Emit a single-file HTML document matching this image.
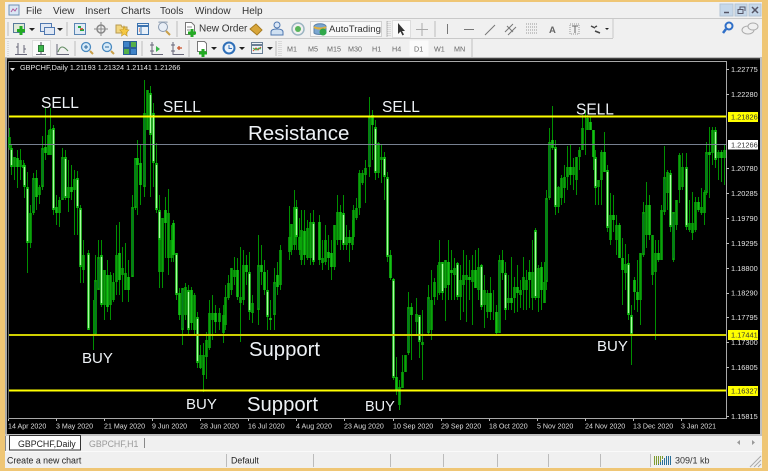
<!DOCTYPE html>
<html><head><meta charset="utf-8"><title>GBPCHF,Daily</title>
<style>
html,body{margin:0;padding:0;background:#f0f0f0;overflow:hidden}
svg{display:block;filter:blur(.35px)}
text{font-family:"Liberation Sans",sans-serif}
.m{font-size:10px;fill:#333}
.t{font-size:7.2px;fill:#666}
.a{font-size:7.4px;fill:#e4e4e4}
.d{font-size:7.1px;fill:#ddd}
.w{fill:#eef2f6}
</style></head><body>
<svg width="768" height="471" viewBox="0 0 768 471" xmlns="http://www.w3.org/2000/svg">
<rect width="768" height="471" fill="#f0f0f0"/>
<!-- outer window frame -->
<rect x="0" y="0" width="768" height="2" fill="#efc675"/>
<rect x="0" y="0" width="5" height="471" fill="#efc675"/>
<rect x="762" y="0" width="6" height="471" fill="#efc675"/>
<rect x="0" y="468" width="768" height="3" fill="#efc675"/>
<rect x="5" y="18" width="757" height="1" fill="#c9c9c9"/>
<rect x="5" y="38" width="608" height="1" fill="#c9c9c9"/>
<rect x="5" y="57" width="757" height="2" fill="#bdbdbd"/>

<!-- menu -->
<g fill="none"><rect x="9" y="5" width="10" height="10" fill="#dbe7f4" stroke="#6f8fb5"/><path d="M11 12l2-3 2 2 2-3" stroke="#b05a9a"/></g>
<text class="m" x="26" y="14">File</text><text class="m" x="53" y="14">View</text><text class="m" x="85" y="14">Insert</text><text class="m" x="121" y="14">Charts</text><text class="m" x="160" y="14">Tools</text><text class="m" x="195" y="14">Window</text><text class="m" x="242" y="14">Help</text>

<!-- window buttons -->
<rect x="720" y="4" width="13" height="12" fill="#c6d8ea" stroke="#b4c4d4"/><rect x="735" y="4" width="12" height="12" fill="#c6d8ea" stroke="#b4c4d4"/><rect x="749" y="4" width="12" height="12" fill="#c6d8ea" stroke="#b4c4d4"/>
<path d="M724 12.500h5" stroke="#556" stroke-width="1.500"/>
<path d="M738 9.500h5v4h-5zM740 9V7h5v4" fill="none" stroke="#556"/>
<path d="M752 7l6 6M758 7l-6 6" stroke="#556" stroke-width="1.500"/>

<!-- toolbar 1 -->
<g fill="none">
<path d="M8 22v14M67 22v14" stroke="#bbb"/>
<rect x="13.500" y="23.500" width="11" height="9" fill="#dfe9d8" stroke="#567a9a"/><path d="M21 26v9M17 30.500h8" stroke="#22aa22" stroke-width="3"/>
<path d="M29 28l3 3 3-3z" fill="#222"/>
<rect x="40.500" y="23.500" width="11" height="8" fill="#e0e8f4" stroke="#4f78b0"/><rect x="44.500" y="27.500" width="10" height="7" fill="#e0e8f4" stroke="#4f78b0"/>
<path d="M57 28l3 3 3-3z" fill="#222"/>
<rect x="74.500" y="23.500" width="11" height="11" fill="#e0eaf4" stroke="#5a86b4"/><path d="M78 27h3M80 30h4" stroke="#22aa44" stroke-width="2"/><path d="M80 29h3" stroke="#d0452a" stroke-width="1.500"/>
<circle cx="101" cy="29" r="4" stroke="#888" stroke-width="1.500"/><path d="M101 22v14M94 29h14" stroke="#888"/>
<path d="M116 25h5l1 2h5v6h-11z" fill="#f2d680" stroke="#b79a50"/><path d="M124 26l1.500 3.500 3.500.5-2.500 2.500.7 3.500-2.700-2-3 2 .7-3.500-2.500-2.500 3.500-.5z" fill="#f5c842" stroke="#c79a20" stroke-width=".6"/>
<rect x="137.500" y="23.500" width="11" height="11" fill="#e8f0f8" stroke="#3d74b0"/><path d="M138 26h10" stroke="#3d74b0" stroke-width="2"/><path d="M141 27v7" stroke="#3d74b0"/><path d="M139 29h1M139 31h1" stroke="#d05030"/>
<circle cx="163" cy="27" r="4.500" fill="#e8eef6" stroke="#8a9ab0"/><path d="M159 23v-1h8v1" stroke="#9aa8ba"/><path d="M166 31l4 4" stroke="#c9a04a" stroke-width="2"/>
<path d="M177 21v16" stroke="#bbb"/>
<path d="M185.500 22.500h6l3 3v9h-9z" fill="#fff" stroke="#777"/><path d="M187 27h5M187 30h3" stroke="#888"/><path d="M192 29v8M188 33h8" stroke="#22aa22" stroke-width="3"/>
</g>
<text x="199" y="31.500" font-size="10" fill="#333">New Order</text>
<g fill="none">
<path d="M250 29l6-5 6 6-5 5z" fill="#d8a63a" stroke="#a87c22"/>
<circle cx="277" cy="25" r="3" fill="#dbe7f6" stroke="#4f78b0"/><path d="M271 35v-3c0-2 2-3 6-3s6 1 6 3v3z" fill="#cfe0f2" stroke="#4f78b0"/>
<circle cx="298" cy="29" r="6" stroke="#9cb5c2" stroke-width="1.500"/><circle cx="298" cy="29" r="3" fill="#58b45a"/>
<rect x="310.500" y="21.500" width="71" height="15" fill="#f8f8f8" stroke="#d0d0d0"/>
<path d="M314 26c2-3 10-3 12 0v7c-2 2-10 2-12 0z" fill="#7aa6d0" stroke="#5a80a8"/><path d="M314 27c3 2 9 2 12 0" stroke="#e0b040" stroke-width="2"/><circle cx="323" cy="32" r="3.500" fill="#2fa84a"/>
<path d="M387 21v16" stroke="#bbb"/><path d="M388 21v16M390 21v16" stroke="#c4c4c4" stroke-dasharray="1 1"/>
</g>
<text x="329" y="32" font-size="9.600" fill="#333">AutoTrading</text>
<g fill="none">
<rect x="392.500" y="20.500" width="18" height="17" fill="#fafafa" stroke="#ddd"/>
<path d="M398 23v11l2.500-2.500 2 4 1.500-1-2-3.500h3z" fill="#333"/>
<path d="M422 23v13M416 29.500h12" stroke="#aaa"/><path d="M435 21v16" stroke="#bbb"/>
<path d="M447.500 24v10" stroke="#777"/><path d="M464 29.500h10" stroke="#777"/><path d="M485 35l10-10" stroke="#777"/>
<path d="M505 32l8-8M508 35l8-8M507 26l6 6" stroke="#777"/><path d="M526 24h11M526 27h11M526 30h11M526 33h11" stroke="#999" stroke-dasharray="1 1"/>
<path d="M570 24h9v10h-9z" stroke="#999" stroke-dasharray="1 1"/><path d="M572 26h6M575 26v7" stroke="#666"/>
<path d="M591 26l4 2M595 31l5 2M597 26l-2 1" stroke="#444" stroke-width="1.500"/><path d="M605 28l2 2 2-2z" fill="#222"/>
<path d="M613 38V19" stroke="#c9c9c9"/>
<circle cx="729" cy="26" r="3.500" stroke="#2f6fc8" stroke-width="2"/><path d="M726 29l-3 4" stroke="#2f6fc8" stroke-width="2.500"/>
<ellipse cx="748" cy="30" rx="6" ry="4" fill="#f0f0f0" stroke="#aaa"/><ellipse cx="753" cy="26.500" rx="5" ry="3.500" fill="#f0f0f0" stroke="#aaa"/>
</g>
<text x="549" y="33" font-size="9.500" font-weight="bold" fill="#666">A</text>

<!-- toolbar 2 -->
<g fill="none">
<path d="M8 41v15" stroke="#c4c4c4" stroke-dasharray="1 1"/>
<path d="M18 43v11M24 45v8M15 54.500h12" stroke="#667"/><path d="M16 47h2M24 49h2" stroke="#667"/>
<rect x="32.500" y="40.500" width="18" height="16" fill="#fafafa" stroke="#ddd"/>
<path d="M41 42v13" stroke="#556"/><rect x="38.500" y="45.500" width="5" height="6" fill="#3bb54a" stroke="#2c7a3a"/><path d="M36 54.500h10" stroke="#667"/>
<path d="M57 44v10.500h12" stroke="#667"/><path d="M58 52c2-6 5-7 10-1" stroke="#5f8a5f"/>
<path d="M75 41v15" stroke="#bbb"/>
<circle cx="86" cy="47" r="4.500" fill="#d8ebf8" stroke="#4a8ac0" stroke-width="1.300"/><path d="M84 47h4M86 45v4" stroke="#2c6aa0"/><path d="M90 51l3 3" stroke="#c9a04a" stroke-width="2"/>
<circle cx="107" cy="47" r="4.500" fill="#d8ebf8" stroke="#4a8ac0" stroke-width="1.300"/><path d="M105 47h4" stroke="#2c6aa0"/><path d="M111 51l3 3" stroke="#c9a04a" stroke-width="2"/>
<rect x="123.500" y="41.500" width="6" height="6" fill="#3f83c8" stroke="#2a5f98"/><rect x="130.500" y="41.500" width="6" height="6" fill="#55b04a" stroke="#2a5f98"/><rect x="123.500" y="48.500" width="6" height="6" fill="#55b04a" stroke="#2a5f98"/><rect x="130.500" y="48.500" width="6" height="6" fill="#3f83c8" stroke="#2a5f98"/>
<path d="M142 41v15" stroke="#bbb"/>
<path d="M152 42v12.500h11M150 45h4M150 51h4" stroke="#667"/><path d="M156 46l4 3-4 3z" fill="#3bb54a"/>
<path d="M173 42v12.500h11M171 45h4M171 51h4" stroke="#667"/><path d="M177 48h5M179 46v4" stroke="#c8502a" stroke-width="1.300"/>
<path d="M189 40v17" stroke="#bbb"/>
<path d="M197.500 41.500h7l2 2v8h-9z" fill="#fff" stroke="#777"/><path d="M203 49v8M199 53h8" stroke="#22aa22" stroke-width="3"/><path d="M211 47l3 3 3-3z" fill="#222"/>
<circle cx="229" cy="48" r="5.500" fill="#eaf2fa" stroke="#2f6fb8" stroke-width="2"/><path d="M229 45v3.500h3" stroke="#2f6fb8"/><path d="M239 47l3 3 3-3z" fill="#222"/>
<rect x="251.500" y="42.500" width="11" height="11" fill="#eef2f6" stroke="#6a7f95"/><path d="M252 45h10" stroke="#6a7f95" stroke-width="2"/><path d="M253 51l3-3 2 2 3-3" stroke="#c8502a"/><path d="M253 48l3 2 3-2 2 1" stroke="#3bb54a"/><path d="M267 47l3 3 3-3z" fill="#222"/>
<path d="M276 41v15" stroke="#bbb"/><path d="M279 41v15M281 41v15" stroke="#c4c4c4" stroke-dasharray="1 1"/>
<rect x="409.500" y="40.500" width="19" height="16" fill="#fafafa"/>
<path d="M472 39v18" stroke="#c0c0c0"/>
</g>
<text class="t" x="287" y="51.500">M1</text><text class="t" x="308" y="51.500">M5</text><text class="t" x="327" y="51.500">M15</text><text class="t" x="348" y="51.500">M30</text><text class="t" x="372" y="51.500">H1</text><text class="t" x="392" y="51.500">H4</text><text class="t" x="414" y="51.500">D1</text><text class="t" x="434" y="51.500">W1</text><text class="t" x="454" y="51.500">MN</text>

<!-- chart -->
<rect x="7" y="59" width="753" height="375" fill="#000"/>
<rect x="5" y="58" width="2" height="377" fill="#a8a8a8"/>
<rect x="760" y="58" width="2" height="377" fill="#c0c0c0"/>
<rect x="7" y="58" width="753" height="1.500" fill="#444"/>
<path d="M8 61.500H726.500V418.500H8" fill="none" stroke="#a8a8a8"/>
<path d="M8.500 419V61" stroke="#666"/>
<path d="M10 68h5l-2.500 3z" fill="#ddd"/>
<text x="20" y="70" font-size="7.300" fill="#e8e8e8">GBPCHF,Daily  1.21193 1.21324 1.21141 1.21266</text>

<g fill="none">
<!-- wicks -->
<path stroke="#008f00" d="M9.500 128V150M11.500 145V175M14.500 157V180M17.500 150V188M20.500 149V180M23.500 160V180M24.500 163V198M27.500 172V273M30.500 205V248M33.500 173V215M36.500 170V210M39.500 185V204M42.500 136V190M45.500 108V160M48.500 130V155M50.500 108V155M53.500 125V215M56.500 195V225M59.500 197V227M62.500 148V200M65.500 150V200M68.500 160V212M71.500 165V200M74.500 170V235M77.500 171V235M80.500 205V283M83.500 240V283M88.500 250V330M93.500 300V350M95.500 255V335M98.500 240V290M101.500 240V307M104.500 270V320M107.500 260V312M110.500 272V320M113.500 273V302M116.500 225V295M119.500 222V295M122.500 247V302M125.500 243V280M128.500 260V302M132.500 195V277M135.500 158V210M137.500 140V215M140.500 145V205M144.500 80V197M147.500 90V130M150.500 86V197M153.500 103V187M156.500 143V213M159.500 195V288M162.500 218V288M165.500 197V258M168.500 189V275M171.500 225V262M173.500 220V262M176.500 253V300M179.500 288V320M182.500 288V345M185.500 283V320M188.500 285V335M191.500 287V330M194.500 293V335M197.500 312V368M200.500 345V369M203.500 343V392M206.500 332V379M209.500 300V350M212.500 295V340M215.500 305V333M219.500 308V330M223.500 305V343M225.500 285V330M228.500 275V300M231.500 268V295M234.500 257V285M237.500 258V300M240.500 247V342M243.500 250V305M246.500 255V285M249.500 252V320M252.500 295V323M258.500 235V325M261.500 245V285M264.500 260V295M267.500 270V330M270.500 300V330M274.500 268V330M277.500 262V295M280.500 245V290M289.500 206V260M291.500 224V255M294.500 190V250M296.500 200V250M299.500 218V255M301.500 210V265M304.500 210V265M307.500 220V260M310.500 213V265M313.500 210V265M319.500 215V265M322.500 240V270M325.500 225V265M328.500 235V270M331.500 240V280M334.500 225V270M337.500 195V245M340.500 205V250M343.500 195V250M346.500 225V250M349.500 230V262M352.500 220V250M353.500 205V240M356.500 198V220M359.500 170V215M362.500 170V185M365.500 160V203M369.500 97V177M372.500 110V160M375.500 120V180M378.500 142V178M381.500 145V183M384.500 152V200M387.500 172V262M390.500 250V280M393.500 278V380M396.500 357V395M399.500 380V410M402.500 355V388M405.500 355V370M408.500 292V355M411.500 303V360M416.500 298V335M419.500 316V358M422.500 310V380M428.500 285V335M431.500 270V340M434.500 278V305M437.500 265V300M439.500 240V295M442.500 265V300M445.500 260V321M448.500 240V300M451.500 250V300M454.500 258V300M457.500 262V300M460.500 265V320M463.500 250V312M466.500 255V322M469.500 260V300M472.500 255V325M475.500 250V285M478.500 248V300M481.500 264V310M484.500 275V328M487.500 290V318M490.500 277V320M493.500 290V320M496.500 305V335M499.500 255V333M502.500 250V280M505.500 262V320M508.500 275V310M511.500 257V310M514.500 277V313M517.500 265V312M520.500 280V308M523.500 257V310M526.500 270V310M529.500 260V308M532.500 240V310M535.500 228V300M538.500 265V312M541.500 262V310M544.500 262V303M546.500 190V290M549.500 128V200M552.500 106V150M555.500 140V215M558.500 186V213M561.500 175V205M564.500 165V203M567.500 146V190M570.500 145V185M573.500 158V190M576.500 157V195M579.500 147V170M582.500 115V150M585.500 110V155M587.500 115V130M590.500 116V130M593.500 130V170M595.500 150V205M598.500 180V205M601.500 150V205M604.500 132V172M607.500 165V232M610.500 193V245M613.500 195V232M616.500 215V255M619.500 223V258M622.500 238V305M625.500 244V290M628.500 254V320M631.500 305V365M634.500 277V310M637.500 260V312M640.500 253V325M643.500 202V257M646.500 182V248M649.500 195V240M652.500 262V285M655.500 240V340M658.500 240V262M661.500 205V260M664.500 146V215M667.500 170V210M670.500 170V232M673.500 212V262M676.500 200V230M679.500 153V203M682.500 153V190M686.500 153V230M689.500 200V232M692.500 192V240M695.500 197V232M698.500 197V212M701.500 188V215M704.500 190V225M706.500 142V195M709.500 127V198M712.500 127V165M715.500 127V168M718.500 150V180M721.500 150V182M724.500 145V185"/>
<!-- bull bodies -->
<path stroke="#09a409" stroke-width="2.600" d="M9.500 137V148M14.500 157V167M20.500 160V167M30.500 213V243M33.500 178V213M39.500 187V195M42.500 148V187M48.500 135V155M50.500 129V155M59.500 200V213M62.500 157V200M68.500 187V198M74.500 179V190M83.500 255V270M95.500 280V335M98.500 257V290M104.500 270V305M110.500 275V305M113.500 282V300M116.500 255V282M122.500 268V275M125.500 273V290M132.500 207V277M135.500 158V208M144.500 113V187M147.500 90V130M159.500 240V272M162.500 218V272M168.500 213V258M171.500 240V258M182.500 288V330M185.500 287V315M194.500 295V330M200.500 355V368M203.500 355V375M206.500 340V357M209.500 313V348M212.500 313V320M219.500 313V322M223.500 315V333M225.500 297V325M228.500 283V298M231.500 268V290M234.500 270V277M240.500 297V303M243.500 265V300M252.500 303V313M258.500 265V310M274.500 282V315M280.500 250V285M289.500 237V252M291.500 224V250M294.500 207V245M299.500 237V250M301.500 230V260M307.500 228V258M310.500 222V258M322.500 258V263M325.500 240V262M334.500 225V267M337.500 212V240M346.500 237V245M352.500 237V245M353.500 210V237M356.500 208V218M359.500 173V208M362.500 173V183M365.500 168V175M369.500 117V167M378.500 143V173M381.500 157V160M399.500 387V405M402.500 372V388M405.500 355V372M408.500 307V353M416.500 314V322M422.500 342V345M428.500 297V333M431.500 300V330M434.500 282V297M439.500 262V293M445.500 260V288M454.500 268V275M460.500 280V297M463.500 275V285M466.500 275V280M472.500 270V282M478.500 267V290M484.500 290V305M487.500 293V312M499.500 260V333M508.500 298V303M514.500 287V298M520.500 290V295M523.500 277V290M526.500 280V290M532.500 272V298M538.500 268V298M544.500 282V303M546.500 198V282M549.500 142V198M558.500 187V207M561.500 178V198M564.500 177V188M567.500 167V177M573.500 167V175M576.500 157V180M579.500 150V157M582.500 128V150M587.500 118V130M598.500 180V187M601.500 152V180M610.500 215V240M616.500 225V240M625.500 264V273M640.500 253V300M643.500 212V255M646.500 205V235M652.500 235V275M655.500 253V272M661.500 210V260M664.500 177V212M667.500 172V193M673.500 212V260M676.500 200V225M679.500 155V190M682.500 167V187M689.500 223V230M692.500 223V233M695.500 202V230M701.500 207V213M704.500 192V213M706.500 152V193M712.500 130V153M718.500 152V158M724.500 150V158"/>
<path stroke="#063" stroke-width="1" opacity=".65" d="M33.500 180V211M42.500 150V185M62.500 159V198M95.500 282V333M98.500 259V288M132.500 209V275M135.500 160V206M144.500 115V185M182.500 290V328M258.500 267V308M274.500 284V313M369.500 119V165M408.500 309V351M428.500 299V331M499.500 262V331M546.500 200V280M549.500 144V196M643.500 214V253M664.500 179V210M673.500 214V258M706.500 154V191"/>
<!-- bear bodies -->
<path stroke="#12c312" stroke-width="2.600" d="M11.500 148V167M17.500 158V167M23.500 165V168M24.500 165V187M27.500 187V243M36.500 178V197M45.500 147V153M53.500 128V210M56.500 207V213M65.500 157V198M71.500 187V192M77.500 178V208M80.500 208V267M88.500 253V330M101.500 255V305M107.500 275V307M119.500 253V280M128.500 277V290M137.500 158V165M140.500 163V185M150.500 93V135M153.500 113V163M156.500 163V210M159.500 210V240M165.500 210V223M173.500 223V255M176.500 253V295M179.500 293V315M188.500 290V330M191.500 290V323M197.500 317V363M215.500 313V322M237.500 270V297M246.500 265V272M249.500 272V312M261.500 265V272M264.500 272V290M267.500 290V317M270.500 318V320M277.500 275V287M296.500 207V237M304.500 231V255M313.500 222V262M319.500 222V260M328.500 252V258M331.500 253V267M340.500 212V240M343.500 213V245M349.500 237V243M372.500 115V125M375.500 127V173M384.500 157V177M387.500 177V257M390.500 255V278M393.500 279V378M396.500 377V390M411.500 307V315M419.500 315V342M442.500 262V293M448.500 262V285M451.500 270V273M457.500 263V297M469.500 277V280M475.500 270V288M481.500 265V307M490.500 293V312M496.500 312V333M502.500 260V273M505.500 273V310M511.500 298V303M517.500 287V293M529.500 272V280M535.500 230V298M541.500 267V290M552.500 140V148M555.500 147V207M570.500 167V175M590.500 122V130M593.500 130V157M595.500 157V188M604.500 152V172M607.500 170V228M613.500 215V220M619.500 225V258M622.500 258V270M628.500 263V315M631.500 315V335M634.500 280V292M637.500 292V300M649.500 205V235M658.500 253V260M670.500 173V227M686.500 167V227M698.500 202V210M709.500 152V155M715.500 130V160M721.500 152V158"/>
<path stroke="#a8ffa0" stroke-width="1.300" d="M11.500 150V165M24.500 167V185M27.500 189V241M53.500 130V208M65.500 159V196M77.500 180V206M80.500 210V265M88.500 255V328M101.500 257V303M150.500 95V133M153.500 115V161M156.500 165V208M159.500 212V238M176.500 255V293M188.500 292V328M197.500 319V361M249.500 274V310M267.500 292V315M296.500 209V235M313.500 224V260M343.500 215V243M375.500 129V171M384.500 159V175M387.500 179V255M393.500 281V376M419.500 317V340M442.500 264V291M457.500 265V295M481.500 267V305M505.500 275V308M535.500 232V296M555.500 149V205M595.500 159V186M607.500 172V226M628.500 265V313M631.500 317V333M670.500 175V225M686.500 169V225M715.500 132V158"/>
</g>

<!-- levels -->
<rect x="9" y="115.500" width="717" height="2" fill="#ffff00"/>
<rect x="9" y="144" width="717" height="1" fill="#778090"/>
<rect x="9" y="334" width="717" height="2" fill="#cfcf00"/>
<rect x="9" y="389.500" width="717" height="2" fill="#ffff00"/>

<!-- annotations -->
<text class="w" x="41" y="108" font-size="15.500">SELL</text>
<text class="w" x="163" y="112" font-size="15.500">SELL</text>
<text class="w" x="382" y="112" font-size="15.500">SELL</text>
<text class="w" x="576" y="114.500" font-size="15.500">SELL</text>
<text class="w" x="248" y="140" font-size="20.500">Resistance</text>
<text class="w" x="249" y="356" font-size="20.300">Support</text>
<text class="w" x="247" y="411" font-size="20.300">Support</text>
<text class="w" x="82" y="363" font-size="15">BUY</text>
<text class="w" x="186" y="409" font-size="15">BUY</text>
<text class="w" x="365" y="411" font-size="14.500">BUY</text>
<text class="w" x="597" y="351" font-size="15">BUY</text>

<!-- price axis -->
<path stroke="#bcbcbc" d="M726 69.500h3M726 94.500h3M726 168.500h3M726 193.500h3M726 218.500h3M726 243.500h3M726 268.500h3M726 293.500h3M726 317.500h3M726 342.500h3M726 367.500h3M726 416.500h3"/>
<text class="a" x="731" y="72">1.22775</text><text class="a" x="731" y="97">1.22280</text><text class="a" x="731" y="171">1.20780</text><text class="a" x="731" y="196">1.20285</text><text class="a" x="731" y="221">1.19790</text><text class="a" x="731" y="246">1.19295</text><text class="a" x="731" y="271">1.18800</text><text class="a" x="731" y="295.500">1.18290</text><text class="a" x="731" y="320">1.17795</text><text class="a" x="731" y="345">1.17300</text><text class="a" x="731" y="370">1.16805</text><text class="a" x="731" y="419">1.15815</text>
<rect x="728" y="112" width="30" height="10" fill="#ffff00"/><text x="731" y="119.500" font-size="7.400" fill="#333">1.21826</text>
<rect x="728" y="140" width="30" height="9.500" fill="#fff"/><text x="731" y="147.500" font-size="7.400" fill="#333">1.21266</text>
<rect x="728" y="330" width="30" height="10" fill="#ffff00"/><text x="731" y="337.500" font-size="7.400" fill="#333">1.17441</text>
<rect x="728" y="386" width="30" height="10" fill="#ffff00"/><text x="731" y="393.500" font-size="7.400" fill="#333">1.16327</text>

<!-- date axis -->
<path stroke="#bcbcbc" d="M8.500 419v2M56.500 419v2M104.500 419v2M152.500 419v2M200.500 419v2M248.500 419v2M296.500 419v2M344.500 419v2M393.500 419v2M441.500 419v2M489.500 419v2M537.500 419v2M585.500 419v2M633.500 419v2M681.500 419v2"/>
<text class="d" x="8" y="428.500">14 Apr 2020</text><text class="d" x="56" y="428.500">3 May 2020</text><text class="d" x="104" y="428.500">21 May 2020</text><text class="d" x="152" y="428.500">9 Jun 2020</text><text class="d" x="200" y="428.500">28 Jun 2020</text><text class="d" x="248" y="428.500">16 Jul 2020</text><text class="d" x="296" y="428.500">4 Aug 2020</text><text class="d" x="344" y="428.500">23 Aug 2020</text><text class="d" x="393" y="428.500">10 Sep 2020</text><text class="d" x="441" y="428.500">29 Sep 2020</text><text class="d" x="489" y="428.500">18 Oct 2020</text><text class="d" x="537" y="428.500">5 Nov 2020</text><text class="d" x="585" y="428.500">24 Nov 2020</text><text class="d" x="633" y="428.500">13 Dec 2020</text><text class="d" x="681" y="428.500">3 Jan 2021</text>

<!-- tabs -->
<rect x="5" y="434" width="757" height="2" fill="#c0c0c0"/>
<rect x="9.500" y="435.500" width="71" height="14.500" fill="#fff" stroke="#333"/>
<text x="18" y="447" font-size="8.800" fill="#222">GBPCHF,Daily</text>
<text x="89" y="447" font-size="8.800" fill="#999">GBPCHF,H1</text>
<path d="M144.500 438v10M5.500 436v15" stroke="#888"/>
<path d="M740 440l-3 2.500 3 2.500zM752 440l3 2.500-3 2.500z" fill="#999"/>

<!-- status bar -->
<rect x="5" y="451" width="757" height="1" fill="#fafafa"/>
<text x="7" y="463.500" font-size="8.800" fill="#222">Create a new chart</text>
<text x="231" y="463.500" font-size="8.800" fill="#222">Default</text>
<path stroke="#bbb" d="M226.500 454v13M313.500 454v13M390.500 454v13M443.500 454v13M497.500 454v13M548.500 454v13M600.500 454v13M650.500 454v13"/>
<path stroke="#7d9a30" stroke-width="1" d="M654.500 456v9M656.500 456v9M658.500 456v9M660.500 456v9M662.500 456v3"/>
<path stroke="#2a6f98" stroke-width="1" d="M658.500 464v1M660.500 462v3M662.500 460v5M664.500 458v7M666.500 456v9M668.500 456v9M670.500 456v9"/>
<text x="675" y="463.500" font-size="9" fill="#333">309/1 kb</text>
<path stroke="#aaa" d="M750 467l11-11M754 467l7-7M758 467l3-3"/>
</svg>
</body></html>
